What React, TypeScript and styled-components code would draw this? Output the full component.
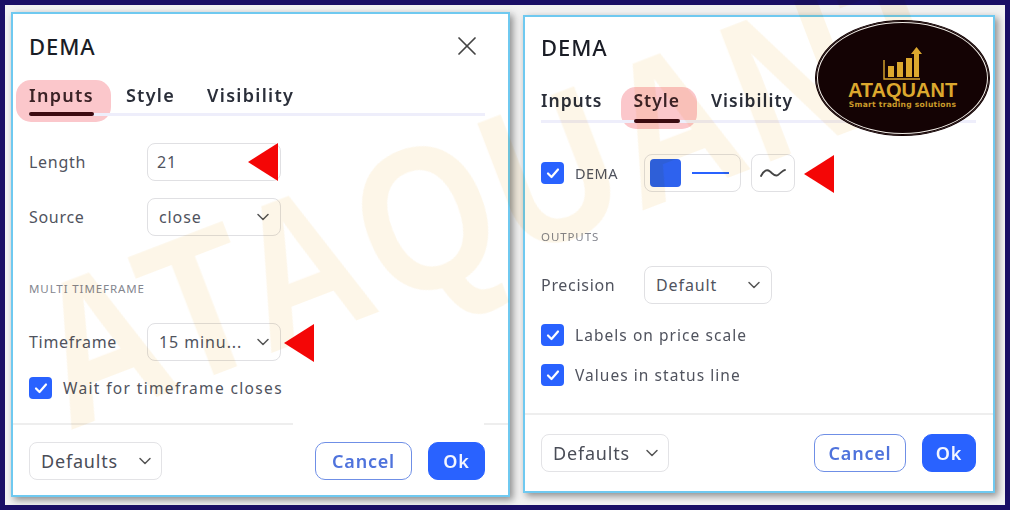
import styled, { createGlobalStyle } from "styled-components";
import { ChevronDown, X } from "lucide-react";

const Global = createGlobalStyle`
  html, body { margin: 0; padding: 0; background: #1a0f66; }
  body { font-family: "Noto Sans", "Open Sans", sans-serif; }
`;

const Page = styled.div`
  position: relative;
  width: 1010px;
  height: 510px;
  box-sizing: border-box;
  padding: 5px;
  background: #1a0f66;
  overflow: hidden;
`;
const Frame = styled.div`
  display: flex;
  align-items: flex-start;
  gap: 13px;
  height: 500px;
  box-sizing: border-box;
  padding-left: 6px;
  background: #f2f2f2;
  filter: blur(0.35px);
`;
const Panel = styled.section<{ $width: number; $height: number; $top: number }>`
  display: flex;
  flex-direction: column;
  flex: none;
  width: ${(p) => p.$width}px;
  height: ${(p) => p.$height}px;
  margin-top: ${(p) => p.$top}px;
  box-sizing: border-box;
  background: #fff;
  border: 2px solid #6fc9f0;
  box-shadow: 3px 3px 7px rgba(60, 60, 60, 0.55);
`;
const Header = styled.header<{ $height: number }>`
  display: flex;
  align-items: center;
  justify-content: space-between;
  height: ${(p) => p.$height}px;
  padding: 0 27px 0 16px;
  flex: none;
`;
const Title = styled.h1`
  margin: 0;
  font-size: 22px;
  font-weight: 500;
  letter-spacing: 0.9px;
  color: #1a1d26;
`;
const CloseIcon = styled(X)`
  width: 32px;
  height: 32px;
  margin-right: -2px;
  color: #444;
  stroke-width: 1.3;
`;
const Tabs = styled.nav<{ $height: number; $pad: number; $gap: number; $right: number; $size: number; $spacing: number }>`
  display: flex;
  align-items: stretch;
  gap: ${(p) => p.$gap}px;
  height: ${(p) => p.$height}px;
  padding-top: ${(p) => p.$pad}px;
  margin: 0 ${(p) => p.$right}px 0 16px;
  flex: none;
  border-bottom: 3px solid #eeeefb;
  box-sizing: border-box;
  font-size: ${(p) => p.$size}px;
  letter-spacing: ${(p) => p.$spacing}px;
`;
const Tab = styled.div<{ $active?: boolean }>`
  position: relative;
  font-weight: 600;
  line-height: 24px;
  color: ${(p) => (p.$active ? "#3b2226" : "#2a2e39")};

  &::before {
    content: "";
    display: ${(p) => (p.$active ? "block" : "none")};
    position: absolute;
    left: -13px;
    right: -17px;
    height: 42px;
    bottom: -9px;
    border-radius: 15px;
    background: #fbc7cb;
    z-index: -1;
  }
  &::after {
    content: "";
    display: ${(p) => (p.$active ? "block" : "none")};
    position: absolute;
    left: 0;
    right: 0;
    bottom: -3px;
    height: 4px;
    border-radius: 2px;
    background: #3c0a10;
  }
`;
const TabLayer = styled.div`
  position: relative;
  z-index: 0;
`;
const Body = styled.div<{ $top: number }>`
  flex: 1;
  padding: ${(p) => p.$top}px 16px 0;
  display: flex;
  flex-direction: column;
`;
const Row = styled.div<{ $mb?: number }>`
  display: flex;
  align-items: center;
  margin-bottom: ${(p) => p.$mb ?? 0}px;
`;
const Label = styled.span<{ $width: number }>`
  width: ${(p) => p.$width}px;
  flex: none;
  font-size: 16px;
  letter-spacing: 0.7px;
  color: #50535e;
`;
const Field = styled.div<{ $width: number; $pad?: number }>`
  position: relative;
  display: flex;
  align-items: center;
  justify-content: space-between;
  width: ${(p) => p.$width}px;
  height: 38px;
  box-sizing: border-box;
  padding: 0 7px 0 ${(p) => p.$pad ?? 11}px;
  border: 1.5px solid #e0e0e3;
  border-radius: 8px;
  background: #fff;
  font-size: 16px;
  letter-spacing: 0.9px;
  color: #50535e;
`;
const Chevron = styled(ChevronDown)`
  width: 20px;
  height: 20px;
  flex: none;
  color: #555;
  stroke-width: 1.8;
`;
const Pointer = styled.svg<{ $x: number; $y: number }>`
  position: absolute;
  left: ${(p) => p.$x}px;
  top: ${(p) => p.$y}px;
  width: 30px;
  height: 38px;
`;
const SectionTitle = styled.div<{ $mt: number; $mb: number }>`
  margin: ${(p) => p.$mt}px 0 ${(p) => p.$mb}px;
  font-size: 11.5px;
  line-height: 16px;
  letter-spacing: 0.9px;
  color: #84868f;
`;
const Check = styled.span`
  display: inline-flex;
  align-items: center;
  justify-content: center;
  width: 23px;
  height: 22px;
  flex: none;
  border-radius: 4px;
  background: #2962ff;
`;
const CheckText = styled.span<{ $small?: boolean; $wide?: boolean }>`
  margin-left: 11px;
  width: ${(p) => (p.$small ? "69px" : "auto")};
  font-size: ${(p) => (p.$small ? 14.5 : 15.5)}px;
  letter-spacing: ${(p) => (p.$small ? 0.45 : p.$wide ? 1.35 : 1.05)}px;
  color: #50535e;
`;
const ColorPicker = styled.div`
  display: flex;
  align-items: center;
  width: 97px;
  height: 38px;
  box-sizing: border-box;
  padding: 0 11px 0 5px;
  border: 1.5px solid #e0e0e3;
  border-radius: 8px;
`;
const Swatch = styled.span`
  width: 31px;
  height: 28px;
  flex: none;
  border-radius: 4px;
  background: #2e62ee;
`;
const ColorLine = styled.span`
  flex: 1;
  height: 2px;
  margin-left: 11px;
  background: #2962ff;
`;
const PlotButton = styled.div`
  position: relative;
  display: flex;
  align-items: center;
  justify-content: center;
  width: 44px;
  height: 38px;
  margin-left: 10px;
  box-sizing: border-box;
  border: 1.5px solid #e0e0e3;
  border-radius: 8px;
`;
const Footer = styled.footer<{ $top: number; $bottom: number; $right: number; $gap?: boolean }>`
  display: flex;
  align-items: center;
  justify-content: space-between;
  flex: none;
  padding: ${(p) => p.$top}px ${(p) => p.$right}px ${(p) => p.$bottom}px 16px;
  border-top: 2px solid #eeeeee;
  border-image: ${(p) =>
    p.$gap
      ? "linear-gradient(90deg, #eee 56.5%, transparent 56.5%, transparent 95%, #eee 95%) 1"
      : "none"};
`;
const Actions = styled.div`
  display: flex;
  gap: 16px;
`;
const Btn = styled.button<{ $primary?: boolean; $width: number }>`
  width: ${(p) => p.$width}px;
  height: 38px;
  padding: 0;
  border-radius: 10px;
  border: 1.5px solid ${(p) => (p.$primary ? "#2962ff" : "#6f8fe6")};
  background: ${(p) => (p.$primary ? "#2962ff" : "#fff")};
  color: ${(p) => (p.$primary ? "#f4f6ff" : "#4f73dc")};
  font-family: inherit;
  font-size: 18px;
  font-weight: 600;
  letter-spacing: 0.8px;
`;
const DefaultsBtn = styled.div<{ $width: number }>`
  display: flex;
  align-items: center;
  justify-content: space-between;
  width: ${(p) => p.$width}px;
  height: 38px;
  box-sizing: border-box;
  padding: 0 6px 0 11px;
  border: 1.5px solid #e3e3e6;
  border-radius: 8px;
  font-size: 18px;
  letter-spacing: 0.8px;
  color: #4a4d57;
`;
const Watermark = styled.div`
  position: absolute;
  left: 42px;
  top: 262px;
  font-family: "Liberation Sans", sans-serif;
  font-size: 205px;
  font-weight: 700;
  line-height: 1;
  letter-spacing: 6px;
  white-space: nowrap;
  color: #fdf6e8;
  transform-origin: left center;
  transform: rotate(-21deg) scaleX(0.84);
  mix-blend-mode: multiply;
  pointer-events: none;
`;
const Logo = styled.div`
  position: absolute;
  left: 815px;
  top: 20px;
  width: 175px;
  height: 116px;
  box-sizing: border-box;
  display: flex;
  flex-direction: column;
  align-items: center;
  padding-top: 25px;
  border-radius: 50%;
  background: #140304;
  box-shadow: inset 0 0 0 1px #140304, inset 0 0 0 2px #f4f0ea;
  border: 1px solid #140304;
`;
const LogoName = styled.div`
  margin-top: -2px;
  font-family: "Liberation Sans", sans-serif;
  font-size: 20px;
  font-weight: 700;
  line-height: 20px;
  color: #dca82e;
`;
const LogoTag = styled.div`
  margin-top: 0;
  font-family: "DejaVu Sans", sans-serif;
  font-size: 7.6px;
  font-weight: 700;
  line-height: 10px;
  letter-spacing: 0.25px;
  color: #c99a2a;
`;

const Tick = () => (
  <svg width="14" height="12" viewBox="0 0 14 12" fill="none">
    <path d="M2 6.5 5.5 10 12 2.5" stroke="#fff" strokeWidth="2.2" strokeLinecap="round" strokeLinejoin="round" />
  </svg>
);

const RedArrow = ({ x, y }: { x: number; y: number }) => (
  <Pointer $x={x} $y={y} viewBox="0 0 30 38">
    <path d="M0 19 30 0V38Z" fill="#f40606" />
  </Pointer>
);

export default function App() {
  return (
    <>
      <Global />
      <Page>
        <Frame>
          <Panel $width={499} $height={485} $top={7}>
            <Header $height={64}>
              <Title>DEMA</Title>
              <CloseIcon />
            </Header>
            <TabLayer>
              <Tabs $height={38} $pad={5} $gap={32} $right={23} $size={18} $spacing={1.3}>
                <Tab $active>Inputs</Tab>
                <Tab>Style</Tab>
                <Tab>Visibility</Tab>
              </Tabs>
            </TabLayer>
            <Body $top={27}>
              <Row $mb={17}>
                <Label $width={118}>Length</Label>
                <Field $width={134} $pad={9}>
                  21
                  <RedArrow x={100} y={-1} />
                </Field>
              </Row>
              <Row>
                <Label $width={118}>Source</Label>
                <Field $width={134}>
                  close
                  <Chevron />
                </Field>
              </Row>
              <SectionTitle $mt={45} $mb={26}>MULTI TIMEFRAME</SectionTitle>
              <Row $mb={16}>
                <Label $width={118}>Timeframe</Label>
                <Field $width={134}>
                  15 minu...
                  <Chevron />
                  <RedArrow x={136} y={0} />
                </Field>
              </Row>
              <Row>
                <Check>
                  <Tick />
                </Check>
                <CheckText $wide>Wait for timeframe closes</CheckText>
              </Row>
            </Body>
            <Footer $top={17} $bottom={15} $right={23} $gap>
              <DefaultsBtn $width={133}>
                Defaults
                <Chevron />
              </DefaultsBtn>
              <Actions>
                <Btn $width={97}>Cancel</Btn>
                <Btn $primary $width={57}>Ok</Btn>
              </Actions>
            </Footer>
          </Panel>

          <Panel $width={472} $height={478} $top={10}>
            <Header $height={60}>
              <Title>DEMA</Title>
              <CloseIcon />
            </Header>
            <TabLayer>
              <Tabs $height={46} $pad={11} $gap={31} $right={17} $size={17.5} $spacing={1}>
                <Tab>Inputs</Tab>
                <Tab $active>Style</Tab>
                <Tab>Visibility</Tab>
              </Tabs>
            </TabLayer>
            <Body $top={31}>
              <Row>
                <Check>
                  <Tick />
                </Check>
                <CheckText $small>DEMA</CheckText>
                <ColorPicker>
                  <Swatch />
                  <ColorLine />
                </ColorPicker>
                <PlotButton>
                  <svg width="26" height="12" viewBox="0 0 26 12" fill="none">
                    <path d="M1 9C4 3 7 2 10 4.500S15 10 18 8 23 3 25 3" stroke="#444" strokeWidth="1.8" strokeLinecap="round" />
                  </svg>
                  <RedArrow x={52} y={0} />
                </PlotButton>
              </Row>
              <SectionTitle $mt={37} $mb={21}>OUTPUTS</SectionTitle>
              <Row $mb={20}>
                <Label $width={103}>Precision</Label>
                <Field $width={128}>
                  Default
                  <Chevron />
                </Field>
              </Row>
              <Row $mb={18}>
                <Check>
                  <Tick />
                </Check>
                <CheckText>Labels on price scale</CheckText>
              </Row>
              <Row>
                <Check>
                  <Tick />
                </Check>
                <CheckText>Values in status line</CheckText>
              </Row>
            </Body>
            <Footer $top={19} $bottom={19} $right={17}>
              <DefaultsBtn $width={128}>
                Defaults
                <Chevron />
              </DefaultsBtn>
              <Actions>
                <Btn $width={92}>Cancel</Btn>
                <Btn $primary $width={54}>Ok</Btn>
              </Actions>
            </Footer>
          </Panel>
        </Frame>
        <Watermark>ATAQUANT</Watermark>
        <Logo>
          <svg width="40" height="36" viewBox="0 0 40 36">
            <path d="M1 14V33H37" fill="none" stroke="#dca82e" strokeWidth="1.4" />
            <path d="M5 20H11V31H5ZM14 16H20V31H14ZM23 12H29V31H23ZM31 8V31H36V8H39L33.500 1 28 8Z" fill="#dca82e" />
          </svg>
          <LogoName>ATAQUANT</LogoName>
          <LogoTag>Smart trading solutions</LogoTag>
        </Logo>
      </Page>
    </>
  );
}
